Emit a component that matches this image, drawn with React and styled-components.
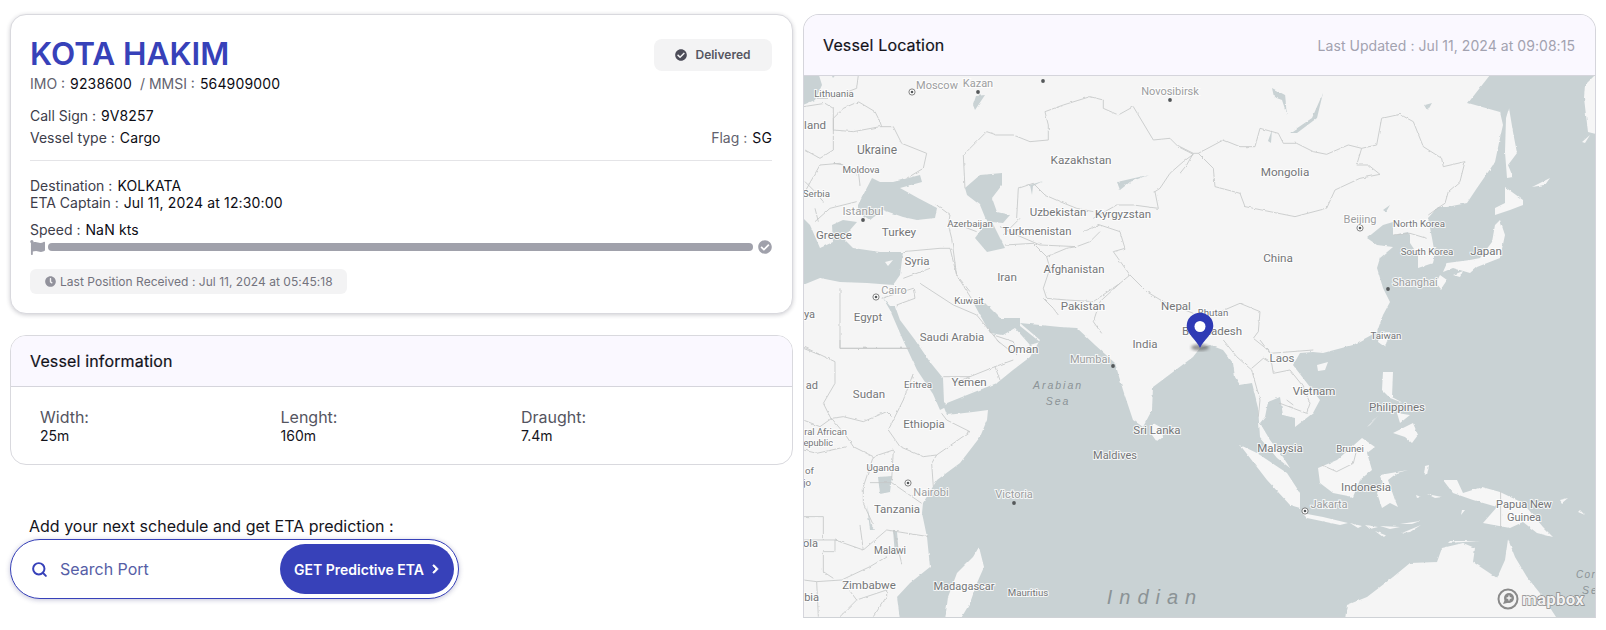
import React from "react";
import styled, { createGlobalStyle } from "styled-components";
import { FaCheckCircle, FaFlag, FaClock, FaChevronRight } from "react-icons/fa";
import { Search } from "lucide-react";

const INDIGO = "#3741b9";

const Global = createGlobalStyle`
  html, body { margin: 0; padding: 0; background: #fff; }
  body { font-family: Inter, "Liberation Sans", sans-serif; color: #14141c; }
  * { box-sizing: border-box; }
`;

const Page = styled.div`
  width: 1606px; height: 630px; padding: 14px 10px 0; overflow: hidden;
  display: grid; grid-template-columns: 783px 793px; column-gap: 10px; align-items: start;
`;
const LeftColumn = styled.div`display: flex; flex-direction: column;`;
const Card = styled.section`
  background: #fff; border: 1px solid #d9d9de; border-radius: 16px; overflow: hidden;
  box-shadow: ${(p) => (p.$raised ? "0 1px 4px rgba(30,30,50,.22)" : "none")};
`;
const SummaryCard = styled(Card)`
  height: 300px; padding: 19px 20px 0 19px; margin-bottom: 21px;
`;
const TopRow = styled.div`display: flex; justify-content: space-between; align-items: flex-start;`;
const Title = styled.h1`
  margin: 0; font-size: 31.5px; line-height: 40px; font-weight: 600; color: ${INDIGO};
`;
const Badge = styled.div`
  margin-top: 5px; width: 118px; height: 32px; padding-bottom: 1px; border-radius: 8px; background: #f3f3f4;
  display: flex; align-items: center; justify-content: center; gap: 8px;
  font-size: 12px; font-weight: 600; color: #565661;
  svg { width: 12px; height: 12px; color: #4c4c58; }
`;
const Line = styled.div`
  font-size: 14px; line-height: ${(p) => p.$lh || 20}px;
  margin-top: ${(p) => p.$mt || 0}px; color: #3d3d4a;
`;
const Muted = styled.span`color: #62626e;`;
const Value = styled.span`color: #0c0c14; margin-left: 5px; letter-spacing: .15px;`;
const Between = styled.div`display: flex; justify-content: space-between;`;
const Rule = styled.hr`margin: 12px 0 16px; border: 0; border-top: 1px solid #e4e4e7;`;
const Progress = styled.div`
  display: flex; align-items: center; height: 16px; margin-top: -1px; gap: 3px; color: #a0a1ab;
`;
const Track = styled.div`flex: 1; height: 8px; border-radius: 4px; background: #a0a1ab;`;
const Chip = styled.div`
  display: flex; align-items: center; gap: 4px; height: 25px; width: 317px;
  margin-top: 14px; padding-left: 15px; border-radius: 6px; background: #f3f3f4;
  font-size: 12px; letter-spacing: .03px; color: #73737e;
  svg { width: 11px; height: 11px; color: #92929c; }
`;
const PanelHeader = styled.header`
  background: #faf8ff; border-bottom: 1px solid #d5d5dc;
  display: flex; align-items: center; justify-content: space-between;
  height: ${(p) => p.$h}px; padding: 0 20px 0 19px;
`;
const PanelTitle = styled.h2`margin: 0; font-size: 16px; font-weight: 400; letter-spacing: .15px; color: #12121a; -webkit-text-stroke: .2px #12121a;`;
const Updated = styled.span`font-size: 14px; letter-spacing: .05px; color: #a2a2b0;`;
const InfoGrid = styled.div`
  display: grid; grid-template-columns: repeat(3, 240.5px); padding: 20px 29px 0; height: 77px;
`;
const InfoLabel = styled.div`font-size: 16px; line-height: 20px; color: #55555f;`;
const InfoValue = styled.div`font-size: 14px; line-height: 18px; color: #14141c;`;
const Prompt = styled.div`
  margin: 51px 0 0 19px; font-size: 16px; line-height: 20px; color: #14141c;
`;
const SearchBar = styled.div`
  margin-top: 3px; width: 449px; height: 60px; border: 1px solid ${INDIGO}; border-radius: 30px;
  box-shadow: 0 1px 5px rgba(40,40,110,.28); background: #fff;
  display: flex; align-items: center; padding: 0 4px 0 20px;
`;
const SearchLabel = styled.span`
  flex: 1; margin-left: 12px; font-size: 16px; color: #565ea6;
`;
const SearchButton = styled.button`
  width: 174px; height: 50px; padding-left: 6px; border: 0; border-radius: 25px; background: ${INDIGO}; color: #fff;
  display: flex; align-items: center; justify-content: center; gap: 7px;
  font: 600 14px Inter, sans-serif;
  svg { width: 9px; height: 10px; stroke: #fff; stroke-width: 40px; }
`;
const MapCard = styled(Card)`height: 604px; border-radius: 16px 16px 0 0; border-color: #d5d5dc; border-bottom-color: #cfd2d6;`;
const MapSvg = styled.svg`display: block; width: 791px; height: 541px; background: #f5f5f5;`;
const Sea = styled.path`fill: #c9d2d4; stroke: none;`;
const Land = styled.path`fill: #f6f6f6; stroke: none;`;
const Border = styled.path`fill: none; stroke: #c6c8c9; stroke-width: 2.6;`;
const Place = styled.text`
  font-family: ${(p) => (p.$kind === "sea" ? '"Liberation Sans"' : 'Roboto, "Liberation Sans"')}, sans-serif;
  font-style: ${(p) => (p.$kind === "sea" ? "italic" : "normal")};
  font-size: ${(p) => p.$size}px;
  letter-spacing: ${(p) => p.$ls || 0}px;
  fill: ${(p) => (p.$kind === "city" ? "#9c9ea0" : p.$kind === "sea" ? "#8b9396" : "#747678")};
  stroke: ${(p) => (p.$kind === "sea" ? "none" : "rgba(255,255,255,.8)")};
  stroke-width: 2px; paint-order: stroke; dominant-baseline: central;
`;
const Wordmark = styled.text`
  font: 700 17px Roboto, sans-serif; letter-spacing: .2px; fill: #f2f2f2; stroke: #8a8a8a; stroke-width: 1.5px; paint-order: stroke;
`;

const SEA_MAIN = `M1490,75 L1468,103 1500,112 1503,125 1500,138 1495,162 1477,188 1467,203 1447,207 1438,207 1428,218 1432,238 1435,255 1433,263 1418,268 1418,255 1410,243 1410,235 1408,232 1393,235 1393,222 1383,225 1367,238 1377,245 1393,247 1380,258 1377,268 1383,288 1390,302 1383,315 1377,332 1353,345 1323,353 1313,352 1300,353 1293,365 1310,387 1320,400 1313,413 1295,427 1295,418 1283,415 1280,397 1268,402 1265,417 1260,423 1270,440 1283,457 1290,468 1277,458 1260,437 1258,407 1252,383 1240,385 1235,377 1233,363 1223,350 1210,345 1200,348 1193,357 1153,387 1152,410 1143,427 1133,420 1123,390 1115,363 1095,345 1077,328 1060,327 1020,323 1040,340 1030,357 1013,370 997,383 947,403 943,405 947,415 973,412 988,410 987,420 980,437 960,463 937,480 923,503 922,513 927,537 930,567 910,583 897,597 900,620 1345,620 1347,605 1367,597 1393,577 1410,563 1437,562 1442,548 1463,543 1475,548 1473,562 1497,578 1505,560 1508,539 1515,557 1527,577 1543,597 1558,620 1600,620 1600,72 1490,72 Z`;
const GULFS = `M973,302 L985,303 1000,318 1020,318 1020,326 1040,342 1030,345 1015,328 1003,335 990,333 980,315 Z
M883,298 L890,306 895,306 900,320 915,340 930,362 943,378 944,402 948,406 940,410 933,394 917,370 903,340 890,310 Z
M858,205 L872,178 880,182 893,182 920,175 922,182 900,188 918,198 937,208 935,218 917,220 903,217 883,210 870,220 858,212 Z
M965,188 L980,175 1002,173 1002,185 992,198 997,212 1010,215 1003,223 992,222 1005,248 987,252 975,238 987,222 980,205 967,195 Z
M803,218 L810,225 820,248 833,242 832,225 843,220 857,222 843,238 853,248 880,252 903,252 900,275 893,285 867,283 840,282 820,278 803,285 Z
M803,72 L818,72 822,85 815,100 803,105 Z M830,72 L838,72 833,78 Z
M1323,93 L1312,118 1290,133 1297,133 1317,118 Z
M1117,182 L1148,175 1130,182 1120,190 Z M1030,185 L1043,181 1033,186 1032,195 Z M1272,130 L1271,143 1268,141 Z
M878,477 L892,476 890,492 880,494 Z M893,530 L897,532 899,555 895,555 Z M867,505 L871,525 875,530 870,530 Z
M976,96 L985,95 975,110 973,105 Z M1145,160 L1152,152 Z M1272,88 L1285,95 1287,115 1282,100 1274,97 Z
M1383,210 L1390,205 1386,212 Z M1425,105 L1432,103 1428,110 Z`;
const ISLANDS = `M1585,85 L1595,75 1600,75 1600,135 1588,132 1584,98 Z
M1500,220 L1505,235 1500,258 1477,267 1470,273 1453,268 1443,272 1447,263 1470,260 1480,258 1492,242 1495,225 Z
M1440,275 L1447,280 1441,289 1436,283 Z M1453,275 L1463,271 1460,277 Z
M1505,187 L1523,200 1523,205 1510,210 1495,215 1495,208 1505,203 Z
M1509,108 L1513,132 1517,153 1508,165 1513,177 1507,178 1505,152 1506,118 Z
M1317,365 L1328,362 1325,370 1318,371 Z M1380,333 L1390,332 1385,347 1378,342 Z
M1383,372 L1393,372 1392,397 1403,403 1390,398 1382,390 Z M1393,433 L1413,423 1418,435 1412,443 1405,437 Z
M1397,413 L1410,415 1400,423 Z M1367,427 L1378,416 1370,425 Z
M1240,445 L1257,453 1287,473 1300,493 1300,508 1290,505 1267,480 Z
M1302,513 L1323,517 1348,523 1340,525 1307,518 Z
M1318,468 L1337,460 1362,438 1375,447 1367,453 1372,470 1360,480 1353,497 1333,493 1320,483 Z
M1380,475 L1408,470 1397,473 1388,480 1395,500 1398,507 1390,503 1382,508 1377,493 1383,483 Z
M1443,480 L1457,480 1463,493 1482,487 1500,492 1523,503 1543,527 1553,537 1537,533 1523,522 1510,528 1483,523 1497,507 1473,500 1453,493 Z
M1350,523 L1362,526 1358,528 Z M1365,525 L1378,527 1370,529 Z M1380,526 L1400,527 1390,529 Z M1400,524 L1420,521 1412,524 Z
M1375,531 L1385,535 1383,537 Z M1402,533 L1421,525 1410,532 Z M1416,495 L1421,497 1417,498 Z M1427,494 L1442,497 1435,498 Z
M1425,466 L1429,465 1427,475 1424,474 Z M1462,510 L1465,510 1461,515 Z M1480,541 L1448,543 1450,541 Z
M979,547 L984,567 977,583 970,603 960,620 945,620 948,597 957,573 973,557 Z
M1153,423 L1162,428 1163,437 1157,442 1152,435 Z
M1580,510 L1585,515 1578,512 Z M1560,500 L1568,498 1562,503 Z M1535,480 L1541,482 Z
M1532,187 L1550,178 1545,185 Z M1582,142 L1590,135 1585,143 Z M885,262 L893,260 888,266 Z`;
const BORDERS_NW = `M495,340 L490,240 530,200 560,170 590,180 640,180 690,200 745,195 745,150 735,110 790,90 870,65 910,75 910,100 955,120 1000,95 1060,195 1110,190 1135,215 1180,238
M1180,238 L1150,260 1110,295 1080,340 1065,350 1075,400 1000,390 950,390 880,430
M650,430 L655,340 700,325 735,360 780,380 830,400 880,410 M610,480 L660,430 M600,455 L650,480 720,510 830,515
M830,515 L870,500 900,470 M850,470 L900,450 960,470 975,520 M740,545 L750,580 730,640 740,670 800,675 880,680 960,625 990,600 940,530 975,520
M615,510 L700,505 740,545 800,520 830,515 M960,625 L900,680 880,740 905,775 M730,670 L760,700 775,720 M990,600 L1040,650 1090,680 1180,715
M410,390 L450,420 445,450 455,490 470,600 510,650 M450,440 L530,470 M420,520 L450,520 470,600 520,680 M310,530 L420,520 M390,580 L310,610 M360,625 L460,690 530,720 600,805 M580,780 L640,800 650,840
M120,640 L120,820 330,820 M245,670 L340,640 345,670 290,690
M15,225 L60,250 100,225 100,165 160,170 240,155 280,155 305,205 380,235 370,280 320,310 M100,165 L100,130 130,100 175,80 225,110 240,140 245,155 M50,70 L90,70 170,40 175,0 M10,95 L75,85 100,100 100,165
M175,290 L180,330 M130,270 L100,265 M15,350 L60,270 120,265 170,300 M45,440 L90,400 170,380 M45,400 L55,440 M15,320 L45,350 70,380 M10,820 L60,840`;
const BORDERS_SW = `M105,65 L105,130 70,190 95,240 M95,235 L130,230 190,245 260,215 275,230 M10,20 L105,65 M120,0 L120,25 330,25
M340,100 L310,180 265,270 300,320 370,350 410,345 510,275 440,240 425,220 M410,345 L395,370 400,440 M280,330 L220,350 190,440 M280,330 L275,420 M210,428 L275,428 365,490
M190,440 L190,490 220,555 M180,555 L190,630 260,570 385,590 M280,570 L305,670 M190,630 L105,600 70,600 M105,600 L105,635 70,635 70,695 100,715
M125,720 L210,680 260,650 M260,750 L260,770 220,830 M125,720 L50,725 10,720 M50,725 L55,830 M125,720 L170,780 260,750 M170,780 L120,830 M10,330 L50,340 140,320 M10,240 L60,260 95,235 140,290 160,320 220,350
M10,530 L70,530 70,600 M10,600 L70,600 M430,110 L510,110 585,80 600,120 M585,80 L640,60 M590,0 L640,40 M510,110 L460,130`;
const BORDERS_NE = `M55,235 L130,195 180,215 225,215 240,160 295,175 310,205 350,205 400,230 440,238 505,210 545,220 590,210 605,130 660,118 700,140 730,215 785,250 790,275 855,260 840,320 805,350 795,385 780,395 745,420
M55,235 L100,280 105,335 180,355 195,395 345,425 440,400 465,345 540,310 600,298 565,270 530,270 545,220 M55,235 L40,235 0,215 M0,295 L20,270 40,235
M640,480 L690,475 740,490 M110,715 L180,685 240,710 235,770 220,790 270,830`;
const BORDERS_SE = `M130,0 L170,50 215,90 240,180 235,230 M215,85 L250,55 275,70 280,100 330,90 370,140 390,190 M300,190 L380,220 390,190 M240,0 L270,40 400,30 M425,375 L470,395 520,370 530,330 M962,455 L962,565 M320,180 L340,195`;

const PLACES = [
  ["Moscow", 937, 85, "city", 11], ["Kazan", 978, 83, "city", 11], ["Lithuania", 834, 93, "small", 9.7],
  ["Novosibirsk", 1170, 91, "city", 11], ["land", 826, 125, "big", 11.5, "end"], ["Ukraine", 877, 150, "big", 12],
  ["Moldova", 861, 169, "small", 9.7], ["Kazakhstan", 1081, 160, "big", 11.7], ["Mongolia", 1285, 172, "big", 11.7],
  ["Serbia", 830, 193, "small", 9.7, "end"], ["Istanbul", 863, 211, "city", 11.5], ["Uzbekistan", 1058, 212, "big", 11.5],
  ["Kyrgyzstan", 1123, 214, "big", 11.5], ["Azerbaijan", 970, 223, "small", 9.7], ["Beijing", 1360, 219, "city", 11],
  ["North Korea", 1419, 223, "small", 9.7], ["Greece", 834, 235, "big", 11.5], ["Turkey", 899, 232, "big", 11.7],
  ["Turkmenistan", 1037, 231, "big", 11.3], ["South Korea", 1427, 251, "small", 9.7], ["Japan", 1486, 251, "big", 11.5],
  ["Syria", 917, 261, "big", 11.5], ["Afghanistan", 1074, 269, "big", 11.3], ["China", 1278, 258, "big", 11.7],
  ["Iran", 1007, 277, "big", 11.7], ["Shanghai", 1415, 282, "city", 11], ["Cairo", 894, 290, "city", 11],
  ["Kuwait", 969, 300, "small", 9.7], ["Pakistan", 1083, 306, "big", 11.5], ["Nepal", 1176, 306, "big", 11.5],
  ["Bhutan", 1213, 312, "small", 9.7], ["ya", 815, 314, "big", 11, "end"], ["Egypt", 868, 317, "big", 11.5],
  ["Saudi Arabia", 952, 337, "big", 11.5], ["Oman", 1023, 349, "big", 11.5], ["Taiwan", 1386, 335, "small", 9.7],
  ["Mumbai", 1090, 359, "city", 11], ["India", 1145, 344, "big", 11.5], ["Bangladesh", 1212, 331, "big", 11.5],
  ["Laos", 1282, 358, "big", 11.5], ["Arabian", 1058, 385, "sea", 10.5, null, 2], ["Sea", 1058, 401, "sea", 10.5, null, 2],
  ["Yemen", 969, 382, "big", 11.5], ["Eritrea", 918, 384, "small", 9.7], ["ad", 818, 385, "big", 11, "end"],
  ["Sudan", 869, 394, "big", 11.5], ["Vietnam", 1314, 391, "big", 11.5], ["Philippines", 1397, 407, "big", 11.5],
  ["Ethiopia", 924, 424, "big", 11.5], ["Sri Lanka", 1157, 430, "big", 11.5], ["ral African", 847, 431, "small", 9.4, "end"],
  ["epublic", 833, 442, "small", 9.2, "end"], ["Malaysia", 1280, 448, "big", 11.5], ["Brunei", 1350, 448, "small", 9.7],
  ["Maldives", 1115, 455, "big", 11], ["Uganda", 883, 467, "small", 9.7], ["of", 814, 470, "small", 9.7, "end"],
  ["jo", 811, 482, "small", 9.7, "end"], ["Nairobi", 931, 492, "city", 11], ["Victoria", 1014, 494, "city", 11],
  ["Indonesia", 1366, 487, "big", 11.5], ["Jakarta", 1329, 504, "city", 11], ["Papua New", 1524, 504, "big", 11],
  ["Guinea", 1524, 517, "big", 11], ["Tanzania", 897, 509, "big", 11.5], ["ola", 818, 543, "big", 11, "end"],
  ["Malawi", 890, 550, "small", 10], ["Zimbabwe", 869, 585, "big", 11.5], ["Madagascar", 964, 586, "big", 11],
  ["Mauritius", 1028, 592, "small", 9.7], ["bia", 819, 597, "big", 11, "end"],
  ["Indian", 1155, 597, "sea", 20, null, 7], ["Cor", 1576, 574, "sea", 10, "start", 1.4], ["Se", 1582, 590, "sea", 10.5, "start", 2],
];
const DOTS = [[912, 92, 1], [978, 92], [1043, 81], [1170, 100], [863, 220], [1360, 228, 1], [1388, 289], [876, 297, 1], [1113, 366], [908, 483, 1], [1014, 503], [1305, 511, 1]];

function WorldMap() {
  return (
    <MapSvg viewBox="804 76 791 541">
      <defs>
        <filter id="coast" x="0" y="0" width="100%" height="100%" colorInterpolationFilters="sRGB">
          <feTurbulence type="fractalNoise" baseFrequency=".18" numOctaves="2" seed="4" />
          <feDisplacementMap in="SourceGraphic" scale="2.4" xChannelSelector="R" yChannelSelector="G" />
          <feGaussianBlur stdDeviation=".3" />
        </filter>
        <filter id="soft"><feGaussianBlur stdDeviation="1.4" /></filter>
      </defs>
      <g filter="url(#coast)">
        <rect x="804" y="76" width="791" height="541" fill="#f5f5f5" />
        <Sea d={SEA_MAIN} />
        <Sea d={GULFS} />
        <Land d={ISLANDS} />
        <g transform="translate(800,75) scale(.3333)"><Border d={BORDERS_NW} /></g>
        <g transform="translate(800,340) scale(.3333)"><Border d={BORDERS_SW} /></g>
        <g transform="translate(1180,75) scale(.3333)"><Border d={BORDERS_NE} /></g>
        <g transform="translate(1180,340) scale(.3333)"><Border d={BORDERS_SE} /></g>
      </g>
      {DOTS.map(([x, y, ring]) => (
        <g key={`${x}-${y}`}>
          {ring && <circle cx={x} cy={y} r="3.1" fill="#fff" stroke="#666" strokeWidth=".8" />}
          <circle cx={x} cy={y} r={ring ? 1.3 : 1.9} fill="#55585a" />
        </g>
      ))}
      {PLACES.map(([t, x, y, kind, size, anchor, ls]) => (
        <Place key={`${t}${x}`} x={x} y={y} $kind={kind} $size={size} $ls={ls} textAnchor={anchor || "middle"}>{t}</Place>
      ))}
      <ellipse cx="1200" cy="347.5" rx="9" ry="3.2" fill="#555" opacity=".6" filter="url(#soft)" />
      <path d="M1200,348 C1196,339 1186.7,334 1186.7,326 A13.3,13.3 0 0 1 1213.3,326 C1213.3,334 1204,339 1200,348 Z" fill="#2f3ab5" />
      <circle cx="1200" cy="326.5" r="5.5" fill="#fff" />
      <g transform="translate(1508,599)">
        <circle r="9.5" fill="#f4f4f4" stroke="#8a8a8a" strokeWidth="2" />
        <circle cx="1" cy="-1" r="5" fill="#8a8a8a" />
        <path d="M-5,5 L-2,-2 L3,3 Z" fill="#8a8a8a" />
        <path d="M1,-3.4 V1.4 M-1.4,-1 H3.4" stroke="#f4f4f4" strokeWidth="1.3" />
      </g>
      <Wordmark x="1522" y="605">mapbox</Wordmark>
    </MapSvg>
  );
}

export default function App() {
  return (
    <Page>
      <Global />
      <LeftColumn>
        <SummaryCard $raised>
          <TopRow>
            <div>
              <Title>KOTA HAKIM</Title>
              <Line><Muted>IMO :</Muted><Value>9238600</Value><Muted>&nbsp; / MMSI :</Muted><Value>564909000</Value></Line>
            </div>
            <Badge><FaCheckCircle />Delivered</Badge>
          </TopRow>
          <Line $mt={12}>Call Sign :<Value>9V8257</Value></Line>
          <Between>
            <Line $mt={2}>Vessel type :<Value>Cargo</Value></Line>
            <Line $mt={2}><Muted>Flag :</Muted><Value>SG</Value></Line>
          </Between>
          <Rule />
          <Line $lh={17}>Destination :<Value>KOLKATA</Value></Line>
          <Line $lh={17}>ETA Captain :<Value>Jul 11, 2024 at 12:30:00</Value></Line>
          <Line $mt={9}>Speed :<Value>NaN kts</Value></Line>
          <Progress>
            <FaFlag size={15} />
            <Track />
            <FaCheckCircle size={14} style={{ marginLeft: 2 }} />
          </Progress>
          <Chip><FaClock />Last Position Received : Jul 11, 2024 at 05:45:18</Chip>
        </SummaryCard>
        <Card>
          <PanelHeader $h={51}><PanelTitle>Vessel information</PanelTitle></PanelHeader>
          <InfoGrid>
            <div><InfoLabel>Width:</InfoLabel><InfoValue>25m</InfoValue></div>
            <div><InfoLabel>Lenght:</InfoLabel><InfoValue>160m</InfoValue></div>
            <div><InfoLabel>Draught:</InfoLabel><InfoValue>7.4m</InfoValue></div>
          </InfoGrid>
        </Card>
        <Prompt>Add your next schedule and get ETA prediction :</Prompt>
        <SearchBar>
          <Search size={17} color={INDIGO} strokeWidth={2.8} />
          <SearchLabel>Search Port</SearchLabel>
          <SearchButton>GET Predictive ETA<FaChevronRight /></SearchButton>
        </SearchBar>
      </LeftColumn>
      <MapCard>
        <PanelHeader $h={61}>
          <PanelTitle>Vessel Location</PanelTitle>
          <Updated>Last Updated : Jul 11, 2024 at 09:08:15</Updated>
        </PanelHeader>
        <WorldMap />
      </MapCard>
    </Page>
  );
}
